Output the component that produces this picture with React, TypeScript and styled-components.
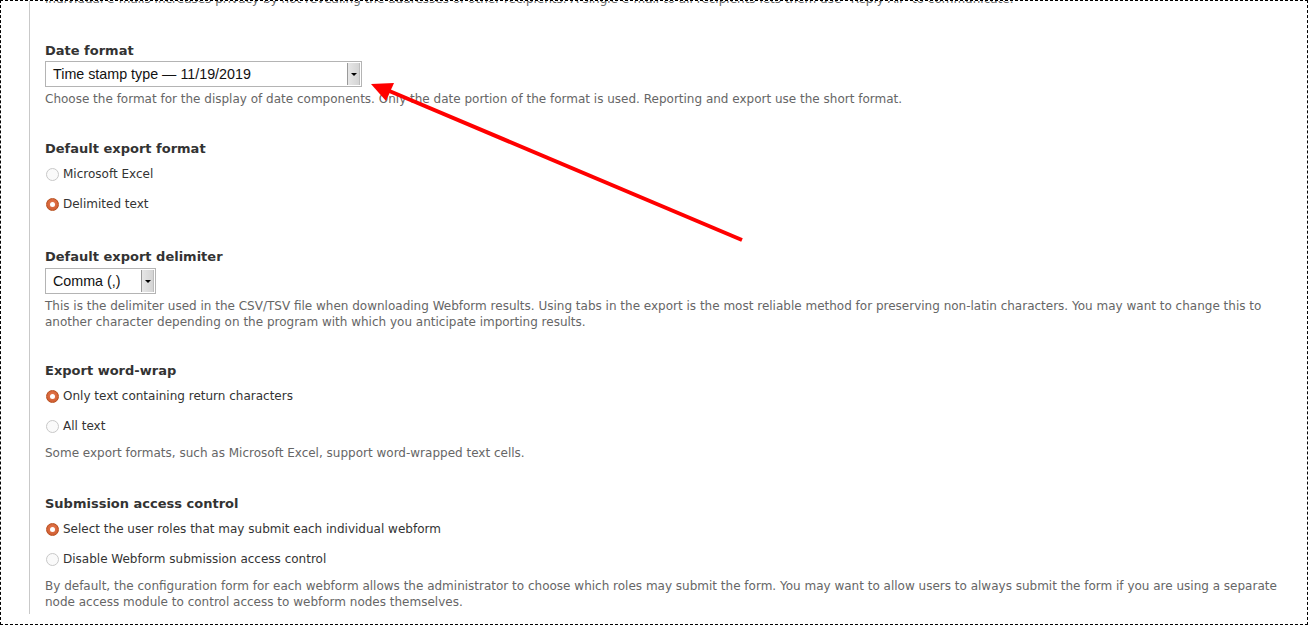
import React from "react";
import styled, { createGlobalStyle } from "styled-components";

const Global = createGlobalStyle`
  html, body { margin: 0; padding: 0; background: #fff; }
  body { font-family: "DejaVu Sans", Verdana, sans-serif; color: #333; }
  * { box-sizing: border-box; }
`;

const Frame = styled.div`
  position: relative;
  width: 1308px;
  height: 625px;
  border: 1px dashed #000;
  overflow: hidden;
  background: #fff;
`;

const Column = styled.div`
  margin-left: 28px;
  height: 100%;
  border-left: 1px solid #c9c9c9;
  padding: 0 20px 0 15px;
`;

const TopText = styled.p`
  margin: -10px 0 0;
  font-size: 12px;
  line-height: 16px;
  color: #666;
`;

const Item = styled.div<{ $gap: number }>`
  margin-top: ${(p) => p.$gap}px;
`;

const Label = styled.div`
  font-size: 13px;
  font-weight: bold;
  line-height: 16px;
  color: #333;
`;

const SelectBox = styled.div<{ $width: number; $mt: number }>`
  margin-top: ${(p) => p.$mt}px;
  width: ${(p) => p.$width}px;
  height: 26px;
  border: 1px solid #b4b4b4;
  display: flex;
  align-items: stretch;
  background: #fff;
`;

const SelectText = styled.span`
  flex: 1;
  padding-left: 7px;
  font-family: "Liberation Sans", Arial, sans-serif;
  font-size: 14.3px;
  line-height: 24px;
  color: #111;
  white-space: nowrap;
`;

const SelectButton = styled.span`
  width: 13px;
  margin: 1px 1px 1px 0;
  background: linear-gradient(to right, #e6e6e6, #d4d4d4);
  border-left: 1px solid #9a9a9a;
  border-right: 1px solid #bdbdbd;
  display: flex;
  align-items: center;
  justify-content: center;
  &::after {
    content: "";
    border-left: 3px solid transparent;
    border-right: 3px solid transparent;
    border-top: 3px solid #000;
  }
`;

const Description = styled.div<{ $mt: number }>`
  margin-top: ${(p) => p.$mt}px;
  font-size: 12px;
  line-height: 16px;
  color: #666;
`;

const Options = styled.div`
  margin-top: 9px;
  display: flex;
  flex-direction: column;
  gap: 14px;
`;

const Option = styled.label`
  display: flex;
  align-items: center;
  gap: 4px;
  font-size: 12px;
  line-height: 16px;
  color: #333;
`;

const Radio = styled.span<{ $checked?: boolean }>`
  width: 13px;
  height: 13px;
  border-radius: 50%;
  margin-left: 1px;
  margin-top: 1px;
  position: relative;
  flex: none;
  ${(p) =>
    p.$checked
      ? `background: radial-gradient(circle at 50% 40%, #e77a4f, #c9552a);
         border: 1px solid #b8501f;
         &::after { content: ""; position: absolute; left: 3px; top: 3px; width: 5px; height: 5px; border-radius: 50%; background: #fff; }`
      : `background: #fafafa; border: 1px solid #c8c8c8;`}
`;

const Arrow = styled.svg`
  position: absolute;
  left: 0;
  top: 0;
  pointer-events: none;
`;

export default function App() {
  return (
    <>
      <Global />
      <Frame>
        <Column>
          <TopText>
            individual e-mails increases privacy by not revealing the addresses of other recipients. A single e-mail to all recipients lets them use "Reply All" to communicate.
          </TopText>

          <Item $gap={36}>
            <Label>Date format</Label>
            <SelectBox $width={317} $mt={2}>
              <SelectText>Time stamp type — 11/19/2019</SelectText>
              <SelectButton />
            </SelectBox>
            <Description $mt={4}>
              Choose the format for the display of date components. Only the date portion of the format is used. Reporting and export use the short format.
            </Description>
          </Item>

          <Item $gap={34}>
            <Label>Default export format</Label>
            <Options>
              <Option><Radio />Microsoft Excel</Option>
              <Option><Radio $checked />Delimited text</Option>
            </Options>
          </Item>

          <Item $gap={37}>
            <Label>Default export delimiter</Label>
            <SelectBox $width={111} $mt={3}>
              <SelectText>Comma (,)</SelectText>
              <SelectButton />
            </SelectBox>
            <Description $mt={4}>
              This is the delimiter used in the CSV/TSV file when downloading Webform results. Using tabs in the export is the most reliable method for preserving non-latin characters. You may want to change this to another character depending on the program with which you anticipate importing results.
            </Description>
          </Item>

          <Item $gap={33}>
            <Label>Export word-wrap</Label>
            <Options>
              <Option><Radio $checked />Only text containing return characters</Option>
              <Option><Radio />All text</Option>
            </Options>
            <Description $mt={11}>
              Some export formats, such as Microsoft Excel, support word-wrapped text cells.
            </Description>
          </Item>

          <Item $gap={35}>
            <Label>Submission access control</Label>
            <Options>
              <Option><Radio $checked />Select the user roles that may submit each individual webform</Option>
              <Option><Radio />Disable Webform submission access control</Option>
            </Options>
            <Description $mt={11}>
              By default, the configuration form for each webform allows the administrator to choose which roles may submit the form. You may want to allow users to always submit the form if you are using a separate node access module to control access to webform nodes themselves.
            </Description>
          </Item>
        </Column>
        <Arrow width="1309" height="626" viewBox="0 0 1309 626">
          <line x1="741" y1="239" x2="386" y2="89" stroke="#ff0000" strokeWidth="4" />
          <polygon points="370,83 393,82 385,100" fill="#ff0000" />
        </Arrow>
      </Frame>
    </>
  );
}
